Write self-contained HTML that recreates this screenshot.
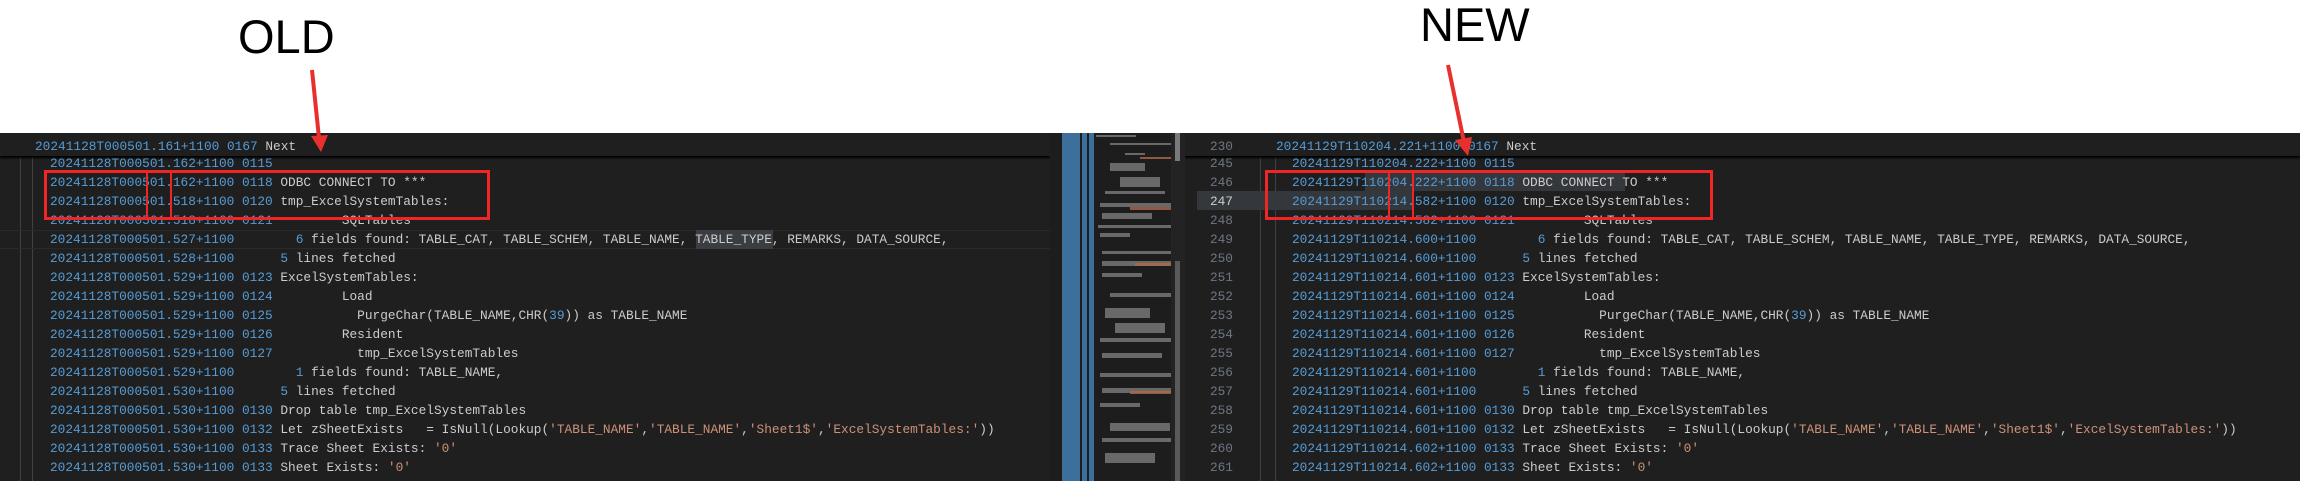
<!DOCTYPE html>
<html><head><meta charset="utf-8"><style>
*{margin:0;padding:0;box-sizing:border-box}
body{width:2300px;height:481px;background:#fff;position:relative;overflow:hidden;font-family:"Liberation Mono",monospace}
.pane{position:absolute;top:133px;height:348px;background:#1f1f1f;overflow:hidden}
.r{position:absolute;white-space:pre;font-size:12.8px;line-height:19px;height:19px;color:#cccccc}
.t{color:#569cd6}.s{color:#ce9178}.n{color:#569cd6}
.ln{position:absolute;font-size:12.8px;line-height:19px;color:#6e7681;text-align:right;width:50px}
.guide{position:absolute;width:1px;background:#404040}
.box{position:absolute;border:3px solid #f02525}
.vl{position:absolute;width:2px;background:#f02525}
.lbl{position:absolute;font-family:"Liberation Sans",Arial,sans-serif;font-size:47px;color:#000}
.L .r{left:50px}
.R .r{left:107px}
.R .ln{left:-2px}
</style></head><body>
<div class="lbl" style="left:238px;top:9px">OLD</div>
<div class="lbl" style="left:1420px;top:-3px">NEW</div>

<!-- LEFT PANE -->
<div class="pane L" style="left:0;width:1050px">
  <div class="guide" style="left:20px;top:23px;height:330px"></div>
  <div class="guide" style="left:32px;top:23px;height:330px"></div>
  <div style="position:absolute;left:0;top:97px;width:1050px;height:19px;border-top:1px solid #2a2a2a;border-bottom:1px solid #2a2a2a"></div>
  <div style="position:absolute;left:696px;top:97px;width:77px;height:19px;background:#3a3d41"></div>
  <div style="position:absolute;left:0;top:0;width:1050px;height:23px;background:#1f1f1f;box-shadow:0 2px 2px #000"></div>
  <div class="r" style="left:35px;top:4px"><span class="t">20241128T000501.161+1100 0167</span> Next</div>
  <div class="r" style="top:20.8px"><span class="t">20241128T000501.162+1100 0115</span></div>
  <div class="r" style="top:39.8px"><span class="t">20241128T000501.162+1100 0118</span> ODBC CONNECT TO ***</div>
  <div class="r" style="top:58.8px"><span class="t">20241128T000501.518+1100 0120</span> tmp_ExcelSystemTables:</div>
  <div class="r" style="top:77.9px"><span class="t">20241128T000501.518+1100 0121</span>         SQLTables</div>
  <div class="r" style="top:96.9px"><span class="t">20241128T000501.527+1100</span>        <span class="n">6</span> fields found: TABLE_CAT, TABLE_SCHEM, TABLE_NAME, TABLE_TYPE, REMARKS, DATA_SOURCE,</div>
  <div class="r" style="top:115.9px"><span class="t">20241128T000501.528+1100</span>      <span class="n">5</span> lines fetched</div>
  <div class="r" style="top:134.9px"><span class="t">20241128T000501.529+1100 0123</span> ExcelSystemTables:</div>
  <div class="r" style="top:153.9px"><span class="t">20241128T000501.529+1100 0124</span>         Load</div>
  <div class="r" style="top:172.9px"><span class="t">20241128T000501.529+1100 0125</span>           PurgeChar(TABLE_NAME,CHR(<span class="n">39</span>)) as TABLE_NAME</div>
  <div class="r" style="top:192.0px"><span class="t">20241128T000501.529+1100 0126</span>         Resident</div>
  <div class="r" style="top:211.0px"><span class="t">20241128T000501.529+1100 0127</span>           tmp_ExcelSystemTables</div>
  <div class="r" style="top:230.0px"><span class="t">20241128T000501.529+1100</span>        <span class="n">1</span> fields found: TABLE_NAME,</div>
  <div class="r" style="top:249.0px"><span class="t">20241128T000501.530+1100</span>      <span class="n">5</span> lines fetched</div>
  <div class="r" style="top:268.0px"><span class="t">20241128T000501.530+1100 0130</span> Drop table tmp_ExcelSystemTables</div>
  <div class="r" style="top:287.1px"><span class="t">20241128T000501.530+1100 0132</span> Let zSheetExists   = IsNull(Lookup(<span class="s">'TABLE_NAME'</span>,<span class="s">'TABLE_NAME'</span>,<span class="s">'Sheet1$'</span>,<span class="s">'ExcelSystemTables:'</span>))</div>
  <div class="r" style="top:306.1px"><span class="t">20241128T000501.530+1100 0133</span> Trace Sheet Exists: <span class="s">'0'</span></div>
  <div class="r" style="top:325.1px"><span class="t">20241128T000501.530+1100 0133</span> Sheet Exists: <span class="s">'0'</span></div>
</div>

<!-- minimap -->
<div style="position:absolute;left:1050px;top:133px;width:135px;height:348px;background:#1d1d1d">
<svg width="135" height="348">
<rect x="12" y="0" width="32" height="348" fill="#3d6f9c"/>
<rect x="30" y="0" width="2" height="348" fill="#1d1d1d"/><rect x="37" y="0" width="2" height="348" fill="#1d1d1d"/>
<g fill="#8a8a8a" opacity="0.7">
<rect x="46" y="2" width="40" height="2"/><rect x="60" y="10" width="70" height="2"/><rect x="75" y="20" width="20" height="2"/>
<rect x="60" y="30" width="35" height="8"/><rect x="70" y="44" width="40" height="10"/><rect x="55" y="58" width="60" height="3"/>
<rect x="50" y="70" width="75" height="4"/><rect x="52" y="80" width="50" height="6"/><rect x="48" y="92" width="80" height="3"/>
<rect x="50" y="100" width="30" height="4"/><rect x="52" y="118" width="78" height="3"/><rect x="52" y="128" width="75" height="5"/>
<rect x="52" y="140" width="40" height="4"/><rect x="60" y="160" width="70" height="4"/><rect x="55" y="175" width="45" height="10"/>
<rect x="65" y="190" width="50" height="10"/><rect x="50" y="205" width="80" height="4"/><rect x="52" y="220" width="60" height="5"/>
<rect x="50" y="240" width="78" height="4"/><rect x="52" y="255" width="70" height="5"/><rect x="50" y="270" width="40" height="4"/>
<rect x="60" y="290" width="60" height="8"/><rect x="52" y="305" width="75" height="4"/><rect x="55" y="320" width="50" height="10"/>
</g>
<g fill="#b0694a" opacity="0.8"><rect x="90" y="24" width="40" height="2"/><rect x="80" y="74" width="45" height="3"/><rect x="85" y="130" width="40" height="3"/><rect x="80" y="258" width="45" height="3"/></g>
<rect x="121" y="0" width="14" height="348" fill="#232323"/>
<rect x="125" y="0" width="5" height="28" fill="#7a7a7a"/>
<rect x="125" y="128" width="5" height="220" fill="#5a5a5a"/>
</svg></div>

<!-- RIGHT PANE -->
<div class="pane R" style="left:1185px;width:1115px">
  <div class="guide" style="left:75px;top:23px;height:330px"></div>
  <div class="guide" style="left:90px;top:23px;height:330px"></div>
  <div style="position:absolute;left:180px;top:39px;width:260px;height:19px;background:#34373b"></div>
  <div style="position:absolute;left:12px;top:58px;width:215px;height:19px;background:#34373b"></div>
  <div style="position:absolute;left:0;top:0;width:1115px;height:23px;background:#1f1f1f;box-shadow:0 2px 2px #000"></div>
  <div class="ln" style="top:4px">230</div>
  <div class="r" style="left:91px;top:4px"><span class="t">20241129T110204.221+1100 0167</span> Next</div>
  <div class="ln" style="top:20.8px">245</div><div class="r" style="top:20.8px"><span class="t">20241129T110204.222+1100 0115</span></div>
  <div class="ln" style="top:39.8px">246</div><div class="r" style="top:39.8px"><span class="t">20241129T110204.222+1100 0118</span> ODBC CONNECT TO ***</div>
  <div class="ln" style="top:58.8px;color:#ccc">247</div><div class="r" style="top:58.8px"><span class="t">20241129T110214.582+1100 0120</span> tmp_ExcelSystemTables:</div>
  <div class="ln" style="top:77.9px">248</div><div class="r" style="top:77.9px"><span class="t">20241129T110214.582+1100 0121</span>         SQLTables</div>
  <div class="ln" style="top:96.9px">249</div><div class="r" style="top:96.9px"><span class="t">20241129T110214.600+1100</span>        <span class="n">6</span> fields found: TABLE_CAT, TABLE_SCHEM, TABLE_NAME, TABLE_TYPE, REMARKS, DATA_SOURCE,</div>
  <div class="ln" style="top:115.9px">250</div><div class="r" style="top:115.9px"><span class="t">20241129T110214.600+1100</span>      <span class="n">5</span> lines fetched</div>
  <div class="ln" style="top:134.9px">251</div><div class="r" style="top:134.9px"><span class="t">20241129T110214.601+1100 0123</span> ExcelSystemTables:</div>
  <div class="ln" style="top:153.9px">252</div><div class="r" style="top:153.9px"><span class="t">20241129T110214.601+1100 0124</span>         Load</div>
  <div class="ln" style="top:172.9px">253</div><div class="r" style="top:172.9px"><span class="t">20241129T110214.601+1100 0125</span>           PurgeChar(TABLE_NAME,CHR(<span class="n">39</span>)) as TABLE_NAME</div>
  <div class="ln" style="top:192.0px">254</div><div class="r" style="top:192.0px"><span class="t">20241129T110214.601+1100 0126</span>         Resident</div>
  <div class="ln" style="top:211.0px">255</div><div class="r" style="top:211.0px"><span class="t">20241129T110214.601+1100 0127</span>           tmp_ExcelSystemTables</div>
  <div class="ln" style="top:230.0px">256</div><div class="r" style="top:230.0px"><span class="t">20241129T110214.601+1100</span>        <span class="n">1</span> fields found: TABLE_NAME,</div>
  <div class="ln" style="top:249.0px">257</div><div class="r" style="top:249.0px"><span class="t">20241129T110214.601+1100</span>      <span class="n">5</span> lines fetched</div>
  <div class="ln" style="top:268.0px">258</div><div class="r" style="top:268.0px"><span class="t">20241129T110214.601+1100 0130</span> Drop table tmp_ExcelSystemTables</div>
  <div class="ln" style="top:287.1px">259</div><div class="r" style="top:287.1px"><span class="t">20241129T110214.601+1100 0132</span> Let zSheetExists   = IsNull(Lookup(<span class="s">'TABLE_NAME'</span>,<span class="s">'TABLE_NAME'</span>,<span class="s">'Sheet1$'</span>,<span class="s">'ExcelSystemTables:'</span>))</div>
  <div class="ln" style="top:306.1px">260</div><div class="r" style="top:306.1px"><span class="t">20241129T110214.602+1100 0133</span> Trace Sheet Exists: <span class="s">'0'</span></div>
  <div class="ln" style="top:325.1px">261</div><div class="r" style="top:325.1px"><span class="t">20241129T110214.602+1100 0133</span> Sheet Exists: <span class="s">'0'</span></div>
</div>

<svg style="position:absolute;left:0;top:0" width="2300" height="481">
<line x1="312" y1="70" x2="319" y2="138" stroke="#e8302c" stroke-width="4"/>
<polygon points="311,136 328,135 321,152" fill="#e8302c"/>
<line x1="1448" y1="65" x2="1464" y2="142" stroke="#e8302c" stroke-width="4"/>
<polygon points="1455,140 1472,137 1468,156" fill="#e8302c"/>
</svg>

<div class="box" style="left:44px;top:170px;width:446px;height:50px"></div>
<div class="vl" style="left:146px;top:171px;height:48px"></div>
<div class="vl" style="left:170px;top:171px;height:48px"></div>
<div class="box" style="left:1265px;top:170px;width:448px;height:50px"></div>
<div class="vl" style="left:1388px;top:171px;height:48px"></div>
<div class="vl" style="left:1412px;top:171px;height:48px"></div>
</body></html>
